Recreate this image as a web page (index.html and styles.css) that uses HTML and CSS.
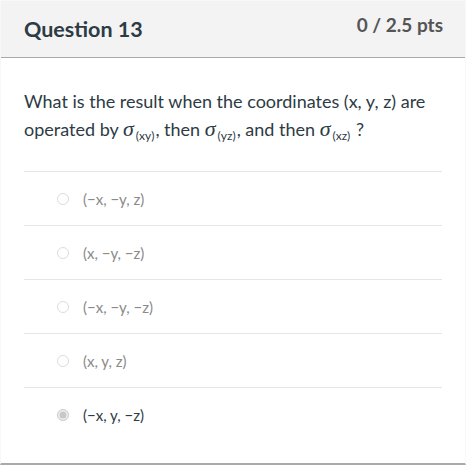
FILE: index.html
```html
<!DOCTYPE html>
<html>
<head>
<meta charset="utf-8">
<link rel="stylesheet" href="styles.css">
</head>
<body>
<div class="card">
  <div class="header">
    <div class="title">Question 13</div>
    <div class="pts">0 / 2.5 pts</div>
  </div>
  <div class="body">
    <p class="question">What is the result when the coordinates (x, y, z) are operated by <span class="sig">σ</span><sub>(xy)</sub>, then <span class="sig">σ</span><sub>(yz)</sub>, and then <span class="sig">σ</span><sub>(xz)</sub> ?</p>
    <div class="answers">
      <div class="answer"><span class="radio"></span><span class="label">(−x, −y, z)</span></div>
      <div class="answer"><span class="radio"></span><span class="label">(x, −y, −z)</span></div>
      <div class="answer"><span class="radio"></span><span class="label">(−x, −y, −z)</span></div>
      <div class="answer"><span class="radio"></span><span class="label">(x, y, z)</span></div>
      <div class="answer selected"><span class="radio"></span><span class="label">(−x, y, −z)</span></div>
    </div>
  </div>
</div>
</body>
</html>
```
FILE: styles.css
```css
html, body {
  margin: 0;
  padding: 0;
  background: #fff;
}
.card {
  width: 466px;
  height: 465px;
  box-sizing: border-box;
  border: 1px solid #f8f8f8;
  border-bottom: 2px solid #aaa;
  font-family: Lato, "Open Sans", sans-serif;
  color: #2d3b45;
}
.header {
  height: 57px;
  box-sizing: border-box;
  background: #f3f3f3;
  border-bottom: 1px solid #aaa;
  display: flex;
  justify-content: space-between;
  align-items: flex-start;
  padding: 0 22px 0 23px;
}
.title {
  font-size: 21.5px;
  font-weight: 700;
  margin-top: 15px;
  line-height: 26px;
  color: #2d3b45;
}
.pts {
  font-size: 19px;
  font-weight: 700;
  color: #555;
  margin-top: 12px;
  line-height: 23px;
}
.body {
  padding: 0 23px;
}
.question {
  margin: 29px 0 28px;
  font-size: 18px;
  line-height: 28px;
}
.sig {
  font-family: "Liberation Serif", "DejaVu Serif", serif;
  font-style: italic;
  font-size: 22px;
  line-height: 1;
  margin-right: 2px;
}
sub {
  font-size: 12px;
  vertical-align: -4px;
  line-height: 1;
  margin-right: 1px;
}
.answer {
  border-top: 1px solid #e6e6e6;
  height: 53px;
  display: flex;
  align-items: center;
  padding-left: 33px;
  font-size: 15px;
  color: #8a8a8a;
}
.radio {
  width: 10px;
  height: 10px;
  border: 1px solid #dcdcdc;
  border-radius: 50%;
  background: #fff;
  margin-right: 14px;
  box-sizing: content-box;
}
.selected {
  color: #2d3b45;
}
.selected .radio {
  background: #c8c8c8;
  box-shadow: inset 0 0 0 1.5px #f2f2f2;
  border-color: #d0d0d0;
}
```
